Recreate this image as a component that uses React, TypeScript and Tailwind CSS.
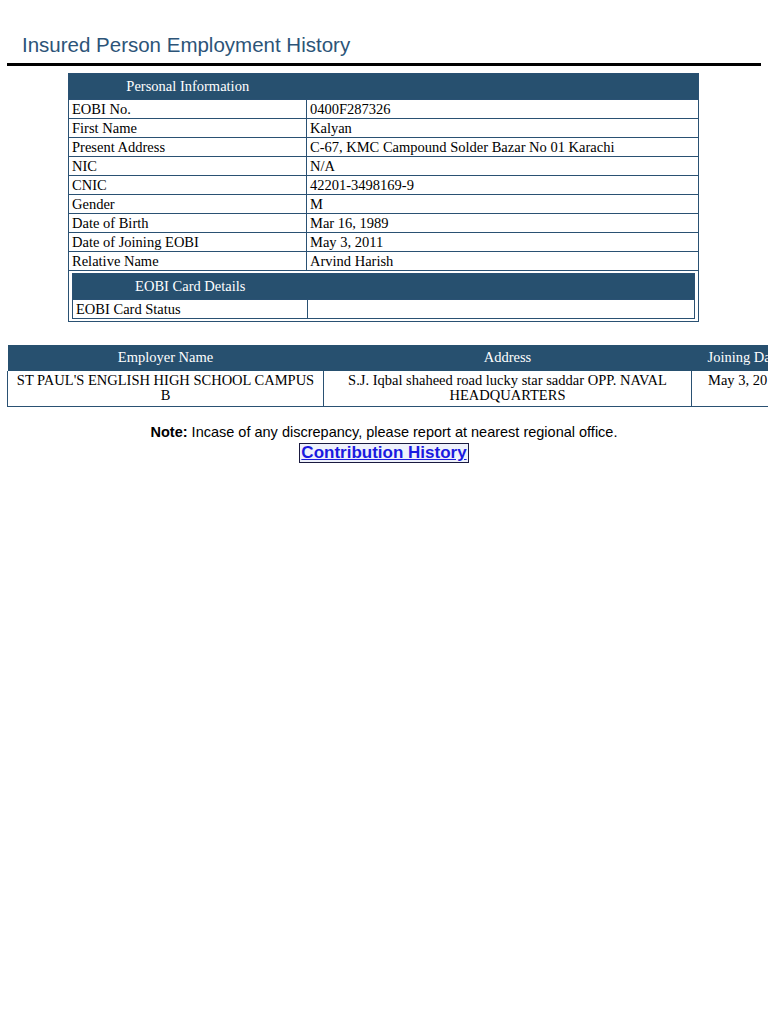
const personal: [string, string][] = [
  ['EOBI No.', '0400F287326'],
  ['First Name', 'Kalyan'],
  ['Present Address', 'C-67, KMC Campound Solder Bazar No 01 Karachi'],
  ['NIC', 'N/A'],
  ['CNIC', '42201-3498169-9'],
  ['Gender', 'M'],
  ['Date of Birth', 'Mar 16, 1989'],
  ['Date of Joining EOBI', 'May 3, 2011'],
  ['Relative Name', 'Arvind Harish'],
];

const serif = { fontFamily: '"Liberation Serif", "Times New Roman", serif' };

export default function App() {
  return (
    <div className="min-h-[1024px] w-[768px] overflow-hidden bg-white text-black" style={{ fontFamily: '"Liberation Sans", Arial, sans-serif' }}>
      <h1 className="pl-[22px] pt-[33px] text-[20.5px] leading-[24px] text-[#2c5478]">
        Insured Person Employment History
      </h1>
      <div className="ml-[7px] mt-[6px] h-[3px] w-[754px] bg-black" />

      <div className="ml-[68px] mt-[7px] w-[631px]" style={serif}>
        <table className="w-full border-collapse border border-[#2a5173] text-[14.5px]">
          <tbody>
            <tr className="h-[26px] bg-[#27506f] text-white">
              <td className="w-[238px] text-center">Personal Information</td>
              <td />
            </tr>
            {personal.map(([k, v]) => (
              <tr key={k} className="h-[19px]">
                <td className="border border-[#2a5173] px-[3px] py-0 leading-[17px]">{k}</td>
                <td className="border border-[#2a5173] px-[3px] py-0 leading-[17px]">{v}</td>
              </tr>
            ))}
            <tr>
              <td colSpan={2} className="border border-[#2a5173] px-[3px] pt-[2px] pb-[2px]">
                <table className="w-full border-collapse border border-[#2a5173]">
                  <tbody>
                    <tr className="h-[26px] bg-[#27506f] text-white">
                      <td className="w-[235px] text-center">EOBI Card Details</td>
                      <td />
                    </tr>
                    <tr className="h-[19px]">
                      <td className="border border-[#2a5173] px-[3px] py-0 leading-[17px]">EOBI Card Status</td>
                      <td className="border border-[#2a5173] px-[3px] py-0 leading-[17px]" />
                    </tr>
                  </tbody>
                </table>
              </td>
            </tr>
          </tbody>
        </table>
      </div>

      <div className="ml-[7px] mt-[23px]" style={serif}>
        <table className="w-[800px] table-fixed border-collapse text-[14.5px]">
          <tbody>
            <tr className="h-[26px] bg-[#27506f] text-white">
              <td className="w-[316px] text-center">Employer Name</td>
              <td className="w-[368px] text-center">Address</td>
              <td className="w-[116px] whitespace-nowrap px-4 text-left">Joining Date</td>
            </tr>
            <tr className="align-top">
              <td className="border-b border-r border-l border-[#2a5173] px-[5px] pt-[2px] pb-[3px] text-center leading-[15px]">
                ST PAUL'S ENGLISH HIGH SCHOOL CAMPUS B
              </td>
              <td className="border-b border-r border-[#2a5173] px-[5px] pt-[2px] pb-[3px] text-center leading-[15px]">
                S.J. Iqbal shaheed road lucky star saddar OPP. NAVAL HEADQUARTERS
              </td>
              <td className="whitespace-nowrap border-b border-[#2a5173] px-4 pt-[2px] text-left leading-[15px]">May 3, 2011</td>
            </tr>
          </tbody>
        </table>
      </div>

      <div className="mt-[17px] flex flex-col items-center text-[14.5px]">
        <p className="leading-[16px]">
          <span className="font-bold">Note:</span> Incase of any discrepancy, please report at nearest regional office.
        </p>
        <a
          href="#"
          className="mt-[3px] border border-[#1a1a40] bg-[#eef1fb] px-[1px] text-[17px] font-bold leading-[18px] text-[#1a1ae0] underline"
        >
          Contribution History
        </a>
      </div>
    </div>
  );
}
